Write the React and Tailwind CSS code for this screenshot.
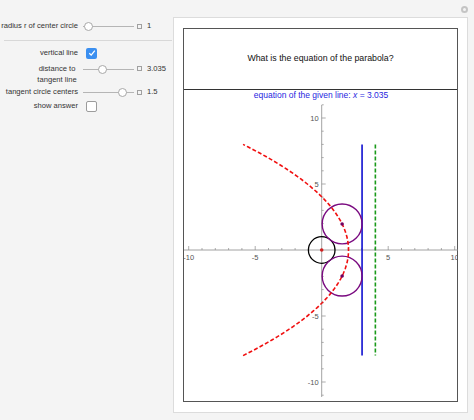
import React from 'react';

const font = { fontFamily: '"Liberation Sans", Arial, sans-serif' };

// plot mapping
const X0 = 137.7;
const Y0 = 160;
const SX = 13.3;
const SY = 13.2;
const px = (x) => X0 + x * SX;
const py = (y) => Y0 - y * SY;

const Slider = ({ pos }) => (
  <div className="relative w-[51px] h-[10px]">
    <div className="absolute left-0 right-0 top-[5px] h-px bg-[#b5b5b5]" />
    <div
      className="absolute top-[1px] w-[9px] h-[9px] rounded-full bg-white border border-[#a8a8a8]"
      style={{ left: pos }}
    />
  </div>
);

const PlusBox = () => <div className="w-[5px] h-[5px] border border-[#a0a0a0] ml-[3px] mr-[5px]" />;

const Checkbox = ({ checked }) =>
  checked ? (
    <div className="w-[11px] h-[11px] rounded-[2px] bg-[#3b8ff0] flex items-center justify-center">
      <svg width="8" height="8" viewBox="0 0 8 8">
        <path d="M1.3 4.2 L3.2 6.1 L6.8 1.6" fill="none" stroke="white" strokeWidth="1.3" />
      </svg>
    </div>
  ) : (
    <div className="w-[11px] h-[11px] rounded-[2px] bg-white border border-[#9c9c9c]" />
  );

const Controls = () => (
  <div className="w-[172px] shrink-0 pt-[20px] text-[7.6px] text-[#333]" style={font}>
    <div className="flex items-center h-[12px]">
      <div className="w-[80px] text-right pr-[2px] whitespace-nowrap">radius r of center circle</div>
      <div className="ml-[3px]"><Slider pos={1} /></div>
      <PlusBox />
      <span>1</span>
    </div>
    <div className="h-px bg-[#d8d8d8] mt-[8px] ml-[4px] mr-0" />
    <div className="flex items-center h-[12px] mt-[6px]">
      <div className="w-[80px] text-right pr-[2px]">vertical line</div>
      <div className="ml-[6px]"><Checkbox checked /></div>
    </div>
    <div className="flex items-start mt-[4px]">
      <div className="w-[80px] pl-[36px] pr-[2px] text-center leading-[11px]">distance to tangent line</div>
      <div className="flex items-center h-[11px] ml-[3px]">
        <Slider pos={15} />
        <PlusBox />
        <span>3.035</span>
      </div>
    </div>
    <div className="flex items-center h-[12px] mt-[1px]">
      <div className="w-[80px] text-right pr-[2px] whitespace-nowrap">tangent circle centers</div>
      <div className="ml-[3px]"><Slider pos={35} /></div>
      <PlusBox />
      <span>1.5</span>
    </div>
    <div className="flex items-center h-[12px] mt-[2px]">
      <div className="w-[80px] text-right pr-[2px]">show answer</div>
      <div className="ml-[6px]"><Checkbox /></div>
    </div>
  </div>
);

const Plot = () => {
  const d = 3.035;
  const r = 1;
  const dir = d + r;
  const pts = [];
  for (let i = 0; i <= 80; i++) {
    const y = -8 + (16 * i) / 80;
    const x = (dir * dir - y * y) / (2 * dir);
    pts.push(`${px(x).toFixed(2)},${py(y).toFixed(2)}`);
  }
  const R = 1.5;
  const cx = d - R;
  const cy = Math.sqrt((R + r) * (R + r) - cx * cx);
  const xt = [];
  for (let i = -10; i <= 10; i++) xt.push(i);
  const yt = [];
  for (let i = -11; i <= 11; i++) yt.push(i);

  return (
    <svg width="274" height="311" viewBox="0 0 274 311" className="block">
      <text x="137" y="7.5" textAnchor="middle" fontSize="8.5" fill="#1f1fe0" style={font}>
        equation of the given line: <tspan fontStyle="italic">x</tspan> = 3.035
      </text>
      {/* axes */}
      <line x1="0" y1={Y0} x2="274" y2={Y0} stroke="#8a8a8a" strokeWidth="0.8" />
      <line x1={X0} y1="15" x2={X0} y2="307" stroke="#8a8a8a" strokeWidth="0.8" />
      {xt.map((t) =>
        t === 0 ? null : (
          <line key={'x' + t} x1={px(t)} x2={px(t)} y1={Y0} y2={Y0 - (t % 5 === 0 ? 4 : 2)} stroke="#8a8a8a" strokeWidth="0.7" />
        )
      )}
      {yt.map((t) =>
        t === 0 ? null : (
          <line key={'y' + t} x1={X0} x2={X0 + (t % 5 === 0 ? 4 : 2)} y1={py(t)} y2={py(t)} stroke="#8a8a8a" strokeWidth="0.7" />
        )
      )}
      <g fontSize="7.5" fill="#555" style={font}>
        <text x={px(-10)} y={Y0 + 10} textAnchor="middle">-10</text>
        <text x={px(-5)} y={Y0 + 10} textAnchor="middle">-5</text>
        <text x={px(5)} y={Y0 + 10} textAnchor="middle">5</text>
        <text x={px(10)} y={Y0 + 10} textAnchor="middle">10</text>
        <text x={X0 - 3} y={py(10) + 2.5} textAnchor="end">10</text>
        <text x={X0 - 3} y={py(5) + 2.5} textAnchor="end">5</text>
        <text x={X0 - 3} y={py(-5) + 2.5} textAnchor="end">-5</text>
        <text x={X0 - 3} y={py(-10) + 2.5} textAnchor="end">-10</text>
      </g>
      {/* lines */}
      <line x1={px(d)} x2={px(d)} y1={py(8)} y2={py(-8)} stroke="#1010d0" strokeWidth="1.6" />
      <line x1={px(dir)} x2={px(dir)} y1={py(8)} y2={py(-8)} stroke="#1a9a1a" strokeWidth="1.6" strokeDasharray="4 2" />
      {/* circles */}
      <circle cx={px(0)} cy={py(0)} r={r * SX} fill="none" stroke="#000" strokeWidth="1.3" />
      <circle cx={px(cx)} cy={py(cy)} r={R * SX} fill="none" stroke="#7a0a80" strokeWidth="1.4" />
      <circle cx={px(cx)} cy={py(-cy)} r={R * SX} fill="none" stroke="#7a0a80" strokeWidth="1.4" />
      <polyline points={pts.join(' ')} fill="none" stroke="#f01010" strokeWidth="1.6" strokeDasharray="4 2.2" />
      <circle cx={px(0)} cy={py(0)} r="1.8" fill="#d02020" />
      <circle cx={px(cx)} cy={py(cy)} r="1.8" fill="#700060" />
      <circle cx={px(cx)} cy={py(-cy)} r="1.8" fill="#700060" />
    </svg>
  );
};

export default function App() {
  return (
    <div className="w-[474px] h-[420px] bg-[#f4f4f4] flex relative overflow-hidden" style={font}>
      <Controls />
      <div className="ml-[1px] mt-[17px]">
        <div className="w-[295px] h-[396px] bg-white border border-[#dcdcdc] pl-[9px] pt-[10px]">
          <div className="w-[275px] h-[374px] border border-[#555] flex flex-col">
            <div className="h-[61px] border-b border-[#333] flex items-center justify-center text-[8.8px] text-[#111]">
              What is the equation of the parabola?
            </div>
            <Plot />
          </div>
        </div>
      </div>
      <div className="absolute left-[461px] top-[6px] w-[7px] h-[7px] rounded-full border-[2px] border-[#c4c4c4]" />
    </div>
  );
}
